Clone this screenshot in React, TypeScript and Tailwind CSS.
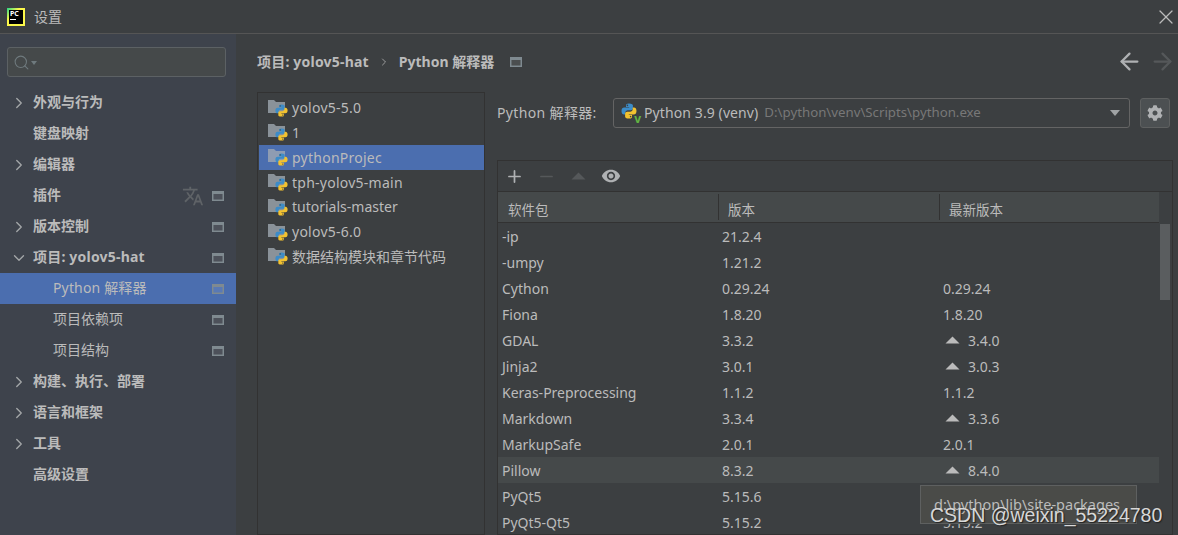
import { ArrowLeft, ArrowRight, ChevronDown, ChevronRight, Minus, Plus, Search, X } from "lucide-react";
import { FaCog } from "react-icons/fa";
import { MdTranslate, MdVisibility } from "react-icons/md";

const font = "font-['Noto_Sans','Noto_Sans_CJK_SC',sans-serif]";

const navItems = [
  { label: "外观与行为", arrow: "right", bold: true },
  { label: "键盘映射", bold: true },
  { label: "编辑器", arrow: "right", bold: true },
  { label: "插件", bold: true, translate: true, win: true },
  { label: "版本控制", arrow: "right", bold: true, win: true },
  { label: "项目: yolov5-hat", arrow: "down", bold: true, win: true, wide: true },
  { label: "Python 解释器", sub: true, active: true, win: true },
  { label: "项目依赖项", sub: true, win: true },
  { label: "项目结构", sub: true, win: true },
  { label: "构建、执行、部署", arrow: "right", bold: true },
  { label: "语言和框架", arrow: "right", bold: true },
  { label: "工具", arrow: "right", bold: true },
  { label: "高级设置", bold: true },
];

const projects = [
  { name: "yolov5-5.0", wide: true },
  { name: "1" },
  { name: "pythonProjec", wide: true, active: true },
  { name: "tph-yolov5-main", wide: true },
  { name: "tutorials-master" },
  { name: "yolov5-6.0", wide: true },
  { name: "数据结构模块和章节代码" },
];

const packages = [
  { name: "-ip", version: "21.2.4", latest: "" },
  { name: "-umpy", version: "1.21.2", latest: "" },
  { name: "Cython", version: "0.29.24", latest: "0.29.24" },
  { name: "Fiona", version: "1.8.20", latest: "1.8.20" },
  { name: "GDAL", version: "3.3.2", latest: "3.4.0", up: true },
  { name: "Jinja2", version: "3.0.1", latest: "3.0.3", up: true },
  { name: "Keras-Preprocessing", version: "1.1.2", latest: "1.1.2" },
  { name: "Markdown", version: "3.3.4", latest: "3.3.6", up: true },
  { name: "MarkupSafe", version: "2.0.1", latest: "2.0.1" },
  { name: "Pillow", version: "8.3.2", latest: "8.4.0", up: true, hover: true },
  { name: "PyQt5", version: "5.15.6", latest: "" },
  { name: "PyQt5-Qt5", version: "5.15.2", latest: "5.15.2" },
];

function WinIcon({ className = "" }: { className?: string }) {
  return (
    <svg width="12" height="10" viewBox="0 0 12 10" className={className}>
      <path d="M0 0h12v10H0zM1.5 3v5.5h9V3z" fill="#7f8a90" fillRule="evenodd" />
      <rect x="1.5" y="3" width="9" height="5.5" fill="#ffffff" fillOpacity="0.08" />
    </svg>
  );
}

function PythonIcon({ size = 16 }: { size?: number }) {
  return (
    <svg width={size} height={size} viewBox="0 0 16 16">
      <path d="M7.9 0.5C5.2 0.5 5 1.6 5 2.6V4h3.2v.6H3.2C1.8 4.6.5 5.5.5 8s1.2 3.5 2.5 3.5h1.3V9.7c0-1.4 1.2-2.5 2.6-2.5h3c1.1 0 2-.9 2-2V2.6c0-1.1-.9-2.1-3.9-2.1z" fill="#3c8cc8" />
      <path d="M8.1 15.5c2.7 0 2.9-1.1 2.9-2.1V12H7.8v-.6h5c1.4 0 2.7-.9 2.7-3.4s-1.2-3.5-2.5-3.5h-1.3v1.8c0 1.4-1.2 2.5-2.6 2.5h-3c-1.1 0-2 .9-2 2v2.6c0 1.1.9 2.1 4 2.1z" fill="#f2c230" />
      <circle cx="6.4" cy="2.4" r=".8" fill="#3c3f41" />
      <circle cx="9.6" cy="13.6" r=".8" fill="#3c3f41" />
    </svg>
  );
}

function FolderPython({ muted }: { muted?: boolean }) {
  return (
    <span className="relative block h-[18px] w-[20px] shrink-0">
      <svg width="17" height="14" viewBox="0 0 17 14" className="absolute left-0 top-0">
        <path d="M0 1h6l2 2h9v11H0z" fill={muted ? "#8e9cb2" : "#8a9299"} />
      </svg>
      <span className="absolute left-[7px] top-[5px]">
        <PythonIcon size={13} />
      </span>
    </span>
  );
}

function UpArrow({ className }: { className: string }) {
  return (
    <svg width="15" height="8" viewBox="0 0 15 8" className={className}>
      <path d="M7.5 0.5 14.5 7.5H.5z" fill="currentColor" />
    </svg>
  );
}

function Sidebar() {
  return (
    <aside className="flex h-full w-[236px] shrink-0 flex-col bg-[#3e434c]">
      <div className="pl-[7px] pr-[10px] pt-[13px]">
        <div className="flex h-[30px] items-center rounded-[3px] border border-[#5c6164] bg-[#45494a] pl-[5px]">
          <Search size={17} strokeWidth={1.5} className="text-[#6f7a7e]" />
          <span className="ml-[1px] mt-[1px] h-0 w-0 border-x-[3px] border-t-[4px] border-x-transparent border-t-[#6f7a7e]" />
        </div>
      </div>
      <div className="mt-[10px] flex flex-col">
        {navItems.map((item) => (
          <div key={item.label} className={`flex h-[31px] items-center pr-[12px] ${item.active ? "bg-[#4b6eaf]" : ""}`}>
            <span className="flex w-[33px] shrink-0 justify-center pl-[10px] pr-[5px]">
              {item.arrow === "right" && <ChevronRight size={18} strokeWidth={1.8} className="shrink-0 text-[#a3a6a8]" />}
              {item.arrow === "down" && <ChevronDown size={18} strokeWidth={1.8} className="shrink-0 text-[#a3a6a8]" />}
            </span>
            <span className={`pb-[2px] text-[14px] leading-none text-[#bbbbbb] ${item.sub ? "ml-[20px]" : ""} ${item.bold ? "font-bold" : ""} ${item.wide ? "tracking-[0.2px]" : ""} ${item.active ? "tracking-[0.15px]" : ""}`}>
              {item.label}
            </span>
            <span className="ml-auto flex items-center gap-[8px]">
              {item.translate && <MdTranslate size={22} className="text-[#5f6367]" />}
              {item.win && <WinIcon />}
            </span>
          </div>
        ))}
      </div>
    </aside>
  );
}

function ProjectList() {
  return (
    <div className="h-full w-[228px] shrink-0 border border-[#323232] bg-[#3c3f41] pl-[1px] pt-[2.3px]">
      {projects.map((p) => (
        <div key={p.name} className={`flex h-[24.8px] items-center pl-[9px] text-[14px] text-[#bbbbbb] ${p.active ? "bg-[#4b6eaf]" : ""} ${p.wide ? "tracking-[0.25px]" : ""}`}>
          <FolderPython muted={p.active} />
          <span className="ml-[4px] whitespace-nowrap">{p.name}</span>
        </div>
      ))}
    </div>
  );
}

function PackageTable() {
  return (
    <div className="relative mt-[32px] h-[375px] border border-[#323232]">
      <div className="flex h-[31px] items-center border-b border-[#323232]">
        <span className="flex w-[32px] justify-center">
          <Plus size={19} strokeWidth={2.2} className="text-[#afb1b3]" />
        </span>
        <span className="flex w-[32px] justify-center">
          <Minus size={19} strokeWidth={2.2} className="text-[#55585a]" />
        </span>
        <span className="flex w-[32px] justify-center">
          <UpArrow className="text-[#55585a]" />
        </span>
        <span className="flex w-[34px] justify-center">
          <MdVisibility size={20} className="text-[#afb1b3]" />
        </span>
      </div>
      <div className="mr-[13px] flex h-[31px] border-b border-[#323232] bg-[#45494a] text-[13.5px] text-[#bbbbbb]">
        <div className="flex w-[220px] items-center pl-[10px] pt-[6px]">软件包</div>
        <div className="my-[2px] flex w-[221px] items-center border-l border-[#323232] pl-[9px] pt-[6px]">版本</div>
        <div className="my-[2px] flex flex-1 items-center border-l border-[#323232] pl-[9px] pt-[6px]">最新版本</div>
      </div>
      <div className="mr-[13px]">
        {packages.map((p) => (
          <div key={p.name} className={`flex h-[26px] items-center text-[14px] text-[#bbbbbb] ${p.hover ? "bg-[#45494a]" : ""}`}>
            <div className="w-[220px] pl-[4px]">{p.name}</div>
            <div className="w-[221px] pl-[4px]">{p.version}</div>
            <div className="flex flex-1 items-center pl-[4px]">
              {p.up && <UpArrow className="ml-[2px] mr-[8px] text-[#bbbbbb]" />}
              {p.latest}
            </div>
          </div>
        ))}
      </div>
      <div className="absolute right-[2px] top-[63px] h-[76px] w-[10px] bg-[#5a5d5f]" />
    </div>
  );
}

export default function App() {
  return (
    <div className={`relative flex h-[535px] w-[1178px] flex-col overflow-hidden bg-[#3c3f41] text-[#bbbbbb] ${font}`}>
      <header className="flex h-[34px] shrink-0 items-center border-b border-[#555555] pl-[7px]">
        <div className="flex h-[18px] w-[18px] flex-col items-center bg-[linear-gradient(135deg,#21d789,#fcf84a_35%,#fcf84a)] p-[2px]">
          <div className="flex h-full w-full flex-col bg-black px-[1px] text-[7px] font-bold leading-[8px] text-white">
            PC
            <span className="mt-[1px] h-[1px] w-[6px] bg-white" />
          </div>
        </div>
        <span className="ml-[9px] text-[14px]">设置</span>
        <X size={24} strokeWidth={1.2} className="ml-auto text-[#bbbbbb]" />
      </header>
      <div className="flex min-h-0 flex-1">
        <Sidebar />
        <main className="flex min-w-0 flex-1 flex-col pl-[21px] pr-[5px]">
          <div className="flex h-[58px] shrink-0 items-center pb-[3px] text-[14px] font-bold">
            <span className="tracking-[0.2px]">项目: yolov5-hat</span>
            <ChevronRight size={12} strokeWidth={1.5} className="mx-[9px]" />
            <span>Python 解释器</span>
            <WinIcon className="ml-[16px]" />
            <ArrowLeft size={27} strokeWidth={2} className="ml-auto text-[#afb1b3]" />
            <ArrowRight size={27} strokeWidth={2} className="ml-[6px] mr-[-3px] text-[#55585a]" />
          </div>
          <div className="flex min-h-0 flex-1">
            <ProjectList />
            <section className="ml-[12px] min-w-0 flex-1 pt-[6px]">
              <div className="flex h-[30px] items-center text-[14px]">
                <span className="w-[116px] shrink-0 pb-[2px] tracking-[0.35px]">Python 解释器:</span>
                <div className="flex h-[30px] w-[517px] items-center rounded-[3px] border border-[#646464] bg-[#3c3f41] pl-[7px]">
                  <span className="relative mr-[3px] block h-[20px] w-[20px]">
                    <PythonIcon size={16} />
                    <span className="absolute bottom-[-2px] right-0 text-[12px] font-bold leading-none text-[#62b543]">v</span>
                  </span>
                  <span className="whitespace-nowrap pb-[1px] tracking-[0.1px]">Python 3.9 (venv)</span>
                  <span className="ml-[6px] whitespace-nowrap text-[13.25px] text-[#787878]">D:\python\venv\Scripts\python.exe</span>
                  <span className="ml-auto mr-[9px] h-0 w-0 border-x-[5px] border-t-[6px] border-x-transparent border-t-[#a0a3a5]" />
                </div>
                <button className="ml-[10px] flex h-[30px] w-[30px] items-center justify-center rounded-[3px] border border-[#5e6060] bg-[#4c5052]">
                  <FaCog size={16} className="text-[#afb1b3]" />
                </button>
              </div>
              <PackageTable />
            </section>
          </div>
        </main>
      </div>
      <div className="absolute left-[920px] top-[485px] h-[39px] w-[217px] border border-[#5e6060] bg-[#4a4b48] pl-[13px] pt-[8px] text-[14.5px] text-[#bbbbbb]">
        d:\python\lib\site-packages
      </div>
      <div className="absolute left-[930px] top-[501px] whitespace-nowrap font-['Liberation_Sans',sans-serif] text-[19.5px] leading-[28px] text-[#d8d8d8] [text-shadow:1px_1px_1px_#222]">
        CSDN @weixin_55224780
      </div>
    </div>
  );
}
